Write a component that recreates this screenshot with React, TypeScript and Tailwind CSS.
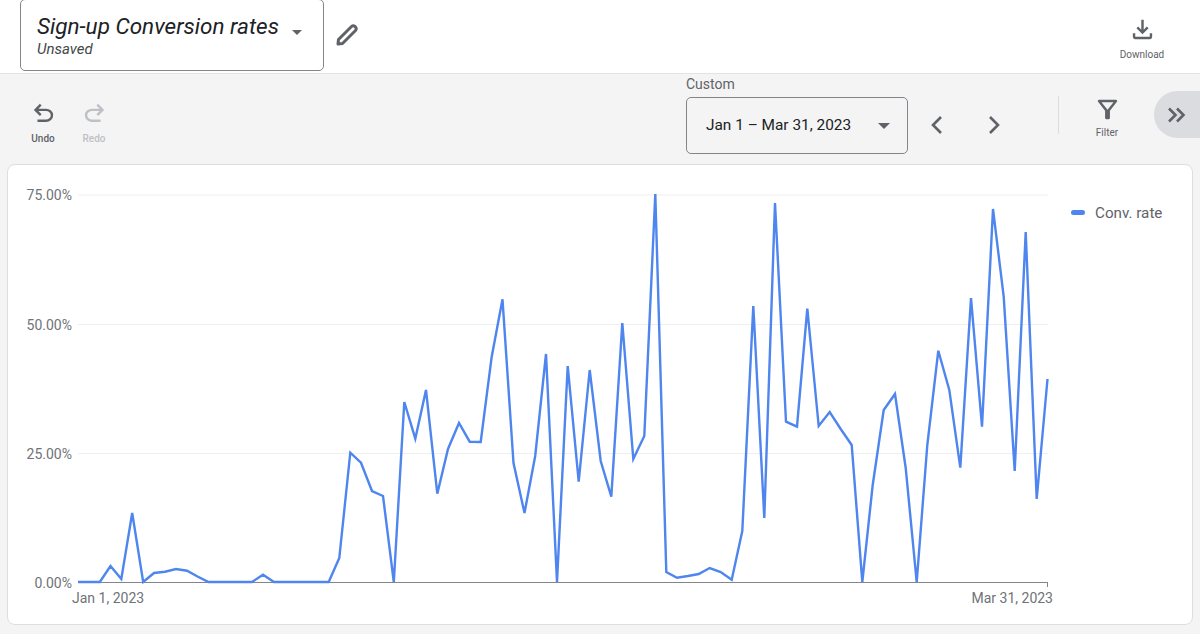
import React from "react";

const pts: [number, number][] = [
  [78,582],[88.9,582],[99.8,582],[110.5,566],[121.3,579],[132.2,513],[143.2,582],[154,573],[165,571.7],[176,569],[187,570.7],[198,576.7],[208.5,582],[219,582],[230,582],[241,582],[252,582],[263,574.7],[274,582],[285,582],[296,582],[307,582],[318,582],[328.7,582],[339.3,558],[350.3,452.7],[361,462.7],[372,491],[383,496],[393.8,582],[404.3,402],[415.3,438.7],[426,390],[437.3,493.7],[448,449],[459,423],[469.7,441.7],[480.7,442],[491.7,356.7],[502.5,299.3],[513.5,463],[524.5,513],[535.2,456],[546,354],[557,582],[567.7,366],[578.7,481.7],[589.7,370],[600.7,461],[611.3,496.7],[622.3,323],[633.3,459],[644.3,436],[655.3,194],[666.3,572],[677,577.7],[688,576],[698.7,574],[709.7,568],[720.7,572],[731.7,579.7],[742.3,531],[753.3,306],[764.3,518],[775,203],[786,421.7],[797,426.7],[807.3,308.7],[818.7,426],[829.7,412],[840.7,429],[851.7,445],[862.3,582],[872.7,485],[883.7,410],[895,394],[905.7,468],[916.7,582],[927.3,445],[938.3,350.7],[949.3,390],[960.3,467.7],[971,298],[982,426.7],[993,209],[1003.7,296.7],[1014.7,471],[1025.7,232],[1036.7,499],[1047.5,379],
];

const font = { fontFamily: "Roboto, 'Liberation Sans', sans-serif" };

function Ic({ d, className }: { d: string; className: string }) {
  return (
    <svg viewBox="0 -960 960 960" className={className} fill="currentColor">
      <path d={d} />
    </svg>
  );
}

const UNDO = "M280-200v-80h284q63 0 109.5-40T720-420q0-60-46.5-100T564-560H312l104 104-56 56-200-200 200-200 56 56-104 104h252q97 0 166.5 63T800-420q0 94-69.5 157T564-200H280Z";
const REDO = "M396-200q-97 0-166.5-63T160-420q0-94 69.5-157T396-640h252L544-744l56-56 200 200-200 200-56-56 104-104H396q-63 0-109.5 40T240-420q0 60 46.5 100T396-280h284v80H396Z";
const DOWNLOAD = "M480-320 280-520l56-58 104 104v-326h80v326l104-104 56 58-200 200ZM240-160q-33 0-56.5-23.5T160-240v-120h80v120h480v-120h80v120q0 33-23.5 56.5T720-160H240Z";
const FILTER = "M440-160q-17 0-28.5-11.5T400-200v-240L168-736q-15-20-4.5-42t36.5-22h560q26 0 36.5 22t-4.5 42L560-440v240q0 17-11.5 28.5T520-160h-80Zm40-308 198-252H282l198 252Z";

export default function App() {
  return (
    <div className="w-[1200px] h-[634px] overflow-hidden bg-[#f4f4f4] flex flex-col" style={font}>
      <header className="h-[74px] shrink-0 bg-white border-b border-[#e3e3e3] flex items-start pl-5 pr-[28px]">
        <div className="w-[304px] h-[72px] border border-[#80868b] rounded-[5px] flex items-center pl-4 pr-[21px] -mt-px">
          <div className="flex-1 flex flex-col">
            <span className="text-[22.5px] leading-[28px] italic text-[#202124] whitespace-nowrap">Sign-up Conversion rates</span>
            <span className="text-[15px] leading-[18px] italic text-[#444746]">Unsaved</span>
          </div>
          <div className="w-0 h-0 border-x-[5px] border-x-transparent border-t-[5px] border-t-[#5f6368] mb-[6px]" />
        </div>
        <svg viewBox="0 0 24 24" className="w-[24px] h-[24px] text-[#5f6368] ml-[11px] mt-[23px]" fill="none" stroke="currentColor" strokeWidth="3" strokeLinejoin="round">
          <path d="M3 21 L3.5 16.5 L16.5 3.5 Q18.2 2 20 3.5 L20.5 4 Q22 5.8 20.5 7.5 L7.5 20.5 Z" />
        </svg>
        <div className="flex-1" />
        <div className="w-[60px] flex flex-col items-center mt-[15px]">
          <Ic d={DOWNLOAD} className="w-[29px] h-[29px] text-[#5f6368]" />
          <span className="text-[10px] leading-[12px] text-[#5f6368] mt-[5px]">Download</span>
        </div>
      </header>

      <div className="h-[90px] shrink-0 flex items-start">
        <div className="w-[40px] ml-[23px] mt-[25px] flex flex-col items-center">
          <Ic d={UNDO} className="w-[29px] h-[29px] text-[#5f6368]" />
          <span className="text-[10px] leading-[12px] font-medium text-[#5f6368] mt-[5px]">Undo</span>
        </div>
        <div className="w-[40px] ml-[11px] mt-[25px] flex flex-col items-center">
          <Ic d={REDO} className="w-[29px] h-[29px] text-[#bdc1c6]" />
          <span className="text-[10px] leading-[12px] font-medium text-[#bdc1c6] mt-[5px]">Redo</span>
        </div>
        <div className="flex-1" />
        <div className="flex flex-col mt-[1px]">
          <span className="text-[14px] leading-[18px] text-[#5f6368]">Custom</span>
          <div className="w-[222px] h-[57px] mt-[4px] border border-[#80868b] rounded-[5px] flex items-center justify-between pl-[19px] pr-[17px]">
            <span className="text-[15.4px] text-[#202124]">Jan 1 – Mar 31, 2023</span>
            <div className="w-0 h-0 border-x-[6.5px] border-x-transparent border-t-[6.5px] border-t-[#5f6368]" />
          </div>
        </div>
        <svg viewBox="0 0 24 24" className="w-[24px] h-[24px] ml-[17px] mt-[39px] text-[#5f6368]" fill="none" stroke="currentColor" strokeWidth="2.6"><path d="M16 4 L8 12 L16 20" /></svg>
        <svg viewBox="0 0 24 24" className="w-[24px] h-[24px] ml-[33px] mt-[39px] text-[#5f6368]" fill="none" stroke="currentColor" strokeWidth="2.6"><path d="M8 4 L16 12 L8 20" /></svg>
        <div className="w-px h-[38px] bg-[#dcdcdc] ml-[52px] mt-[22px]" />
        <div className="w-[40px] ml-[28px] mt-[21px] flex flex-col items-center">
          <Ic d={FILTER} className="w-[29px] h-[29px] text-[#5f6368]" />
          <span className="text-[10px] leading-[12px] text-[#5f6368] mt-[3px]">Filter</span>
        </div>
        <div className="w-[46px] h-[47px] ml-[27px] mt-[17px] bg-[#dadce0] rounded-l-full flex items-center pl-[14px]">
          <svg viewBox="0 0 18 16" className="w-[18px] h-[16px] text-[#5f6368]" fill="none" stroke="currentColor" strokeWidth="2.6"><path d="M1 1.5 L7.5 8 L1 14.5 M9 1.5 L15.5 8 L9 14.5" /></svg>
        </div>
      </div>

      <div className="w-[1186px] h-[461px] ml-[7px] bg-white border border-[#dedede] rounded-[8px] flex overflow-hidden">
        <svg viewBox="8 165 1060 459" className="w-[1060px] h-[459px] shrink-0">
          {[195, 324.5, 453.5].map((y) => (
            <line key={y} x1={78} x2={1048} y1={y} y2={y} stroke="#efefef" strokeWidth="1" />
          ))}
          <line x1={78} x2={1048} y1={582.5} y2={582.5} stroke="#80868b" strokeWidth="1" />
          <line x1={1047.5} x2={1047.5} y1={582.5} y2={587} stroke="#80868b" strokeWidth="1" />
          {[["75.00%", 200], ["50.00%", 330], ["25.00%", 459], ["0.00%", 588]].map(([t, y]) => (
            <text key={t} x={72} y={y as number} textAnchor="end" fontSize="14" fill="#6f7377" style={font}>{t}</text>
          ))}
          <text x={72} y={603} fontSize="14" fill="#6f7377" style={font}>Jan 1, 2023</text>
          <text x={1053} y={603} textAnchor="end" fontSize="14" fill="#6f7377" style={font}>Mar 31, 2023</text>
          <polyline points={pts.map((p) => p.join(",")).join(" ")} fill="none" stroke="#4e85ee" strokeWidth="2.4" strokeLinejoin="miter" />
        </svg>
        <div className="flex items-start mt-[39px] ml-[3px]">
          <div className="w-[14px] h-[5px] rounded-full bg-[#4e85ee] mt-[6px]" />
          <span className="text-[15.2px] leading-[18px] text-[#5f6368] ml-[10px] whitespace-nowrap">Conv. rate</span>
        </div>
      </div>
    </div>
  );
}
